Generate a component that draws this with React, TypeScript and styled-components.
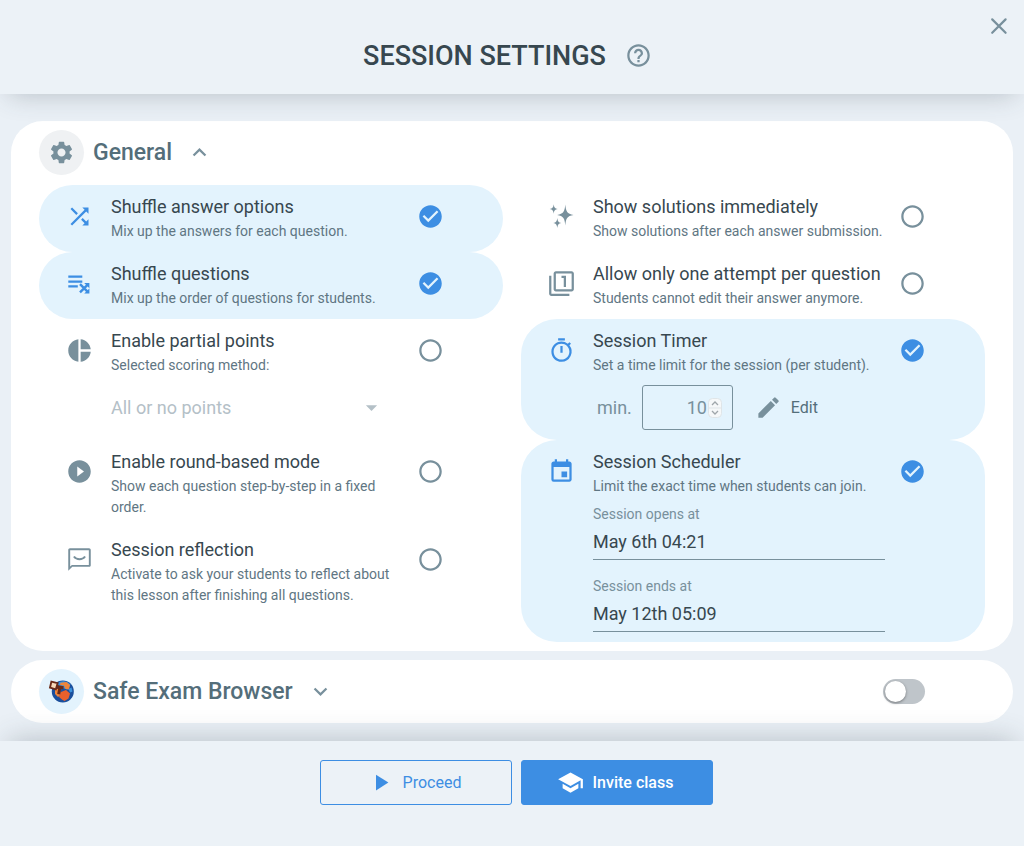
import React, { useState } from 'react';
import styled, { createGlobalStyle } from 'styled-components';
import {
  MdArrowDropDown,
  MdCheckCircle,
  MdEdit,
  MdEvent,
  MdHelpOutline,
  MdKeyboardArrowDown,
  MdKeyboardArrowUp,
  MdOutlineFilter1,
  MdOutlineTimer,
  MdPieChart,
  MdPlayArrow,
  MdPlayCircleFilled,
  MdRadioButtonUnchecked,
  MdSchool,
  MdSettings,
  MdShuffle,
} from 'react-icons/md';

const color = {
  page: '#ecf2f7',
  body: '#eaf0f6',
  ink: '#37474f',
  heading: '#546e7a',
  muted: '#5f7683',
  icon: '#78909c',
  faint: '#b4c0c7',
  blue: '#3d8ee3',
  tint: '#e3f3fd',
};

const GlobalStyle = createGlobalStyle`
  *, *::before, *::after { box-sizing: border-box; }
  body {
    margin: 0;
    background: ${color.page};
    color: ${color.ink};
    font-family: Roboto, "Liberation Sans", sans-serif;
  }
  button, input, select { font: inherit; color: inherit; margin: 0; }
  button { cursor: pointer; }
  svg { display: block; flex: none; }
`;

const Page = styled.div`
  display: flex;
  flex-direction: column;
  min-height: 100vh;
`;

const Header = styled.header`
  position: relative;
  z-index: 1;
  display: flex;
  align-items: center;
  justify-content: center;
  gap: 19px;
  height: 94px;
  padding: 17px 9px 0 0;
  background: ${color.page};
  box-shadow: 0 9px 27px -9px rgba(55, 71, 79, 0.3);
`;

const PageTitle = styled.h1`
  margin: 0;
  font-size: 27px;
  line-height: 36px;
  font-weight: 500;
  text-transform: uppercase;
`;

const IconButton = styled.button`
  display: flex;
  padding: 0;
  border: 0;
  background: none;
  color: ${color.icon};
`;

const CloseButton = styled(IconButton)`
  position: absolute;
  top: 12px;
  right: 12px;
`;

const Main = styled.main`
  flex: 1;
  display: flex;
  flex-direction: column;
  gap: 9px;
  padding: 27px 11px 18px;
  background: ${color.body};
`;

const Card = styled.section`
  padding: 9px 28px;
  border-radius: 32px;
  background: #fff;
`;

const CardHeader = styled.div`
  display: flex;
  align-items: center;
  justify-content: space-between;
  padding-right: 60px;
`;

const CardToggle = styled.button`
  display: flex;
  align-items: center;
  gap: 14px;
  padding: 0;
  border: 0;
  background: none;
  color: ${color.icon};
`;

const CardTitle = styled.span`
  display: flex;
  align-items: center;
  gap: 9px;
  color: ${color.heading};
  font-size: 23px;
  line-height: 28px;
  font-weight: 500;
`;

const Badge = styled.span<{ $tinted?: boolean }>`
  display: grid;
  place-items: center;
  width: 45px;
  height: 45px;
  border-radius: 50%;
  background: ${(p) => (p.$tinted ? color.tint : '#eff1f3')};
  color: ${color.icon};
`;

const Columns = styled.div`
  display: grid;
  grid-template-columns: 1fr 1fr;
  gap: 18px;
  padding-top: 10px;
`;

const Column = styled.div`
  display: flex;
  flex-direction: column;
`;

const Option = styled.div<{ $on: boolean }>`
  display: grid;
  grid-template-columns: 27px 1fr 27px;
  gap: 0 14px;
  align-items: start;
  padding: 10px 59px 10px 27px;
  border-radius: 36px;
  background: ${(p) => (p.$on ? color.tint : 'transparent')};
`;

const OptionIcon = styled.span<{ $on: boolean }>`
  padding-top: 8px;
  color: ${(p) => (p.$on ? color.blue : color.icon)};
`;

const OptionBody = styled.div`
  min-width: 0;
  padding-left: 4px;
`;

const OptionTitle = styled.label`
  display: block;
  font-size: 18px;
  line-height: 24px;
`;

const OptionText = styled.p`
  margin: 2px 0 0;
  color: ${color.muted};
  font-size: 14px;
  line-height: 21px;
`;

const Check = styled.span<{ $on: boolean }>`
  position: relative;
  display: block;
  margin-top: 8px;
  color: ${(p) => (p.$on ? color.blue : color.icon)};
`;

const CheckInput = styled.input`
  position: absolute;
  inset: 0;
  width: 100%;
  height: 100%;
  opacity: 0;
  cursor: pointer;
`;

const SelectWrap = styled.div`
  display: grid;
  align-items: center;
  margin: 9px 18px 0 0;
  color: ${color.faint};
  > * { grid-area: 1 / 1; }
  > svg { justify-self: end; pointer-events: none; }
`;

const Select = styled.select`
  appearance: none;
  width: 100%;
  height: 45px;
  padding: 0;
  border: 0;
  background: none;
  font-size: 18px;
  &:disabled { opacity: 1; color: ${color.faint}; }
`;

const TimerRow = styled.div`
  display: flex;
  align-items: center;
  margin-top: 9px;
  padding-left: 4px;
  color: ${color.icon};
  font-size: 18px;
`;

const NumberBox = styled.div`
  display: flex;
  align-items: center;
  width: 91px;
  height: 45px;
  margin: 0 22px 0 10px;
  padding-right: 10px;
  border: 1px solid ${color.icon};
  border-radius: 3px;
`;

const NumberInput = styled.input`
  appearance: textfield;
  flex: 1;
  min-width: 0;
  padding: 0 1px 0 0;
  border: 0;
  outline: 0;
  background: none;
  text-align: right;
  &::-webkit-inner-spin-button { appearance: none; }
`;

const EditButton = styled.button`
  display: flex;
  align-items: center;
  gap: 9px;
  padding: 0;
  border: 0;
  background: none;
  color: ${color.heading};
  font-size: 16px;
  > svg { color: ${color.icon}; }
`;

const Fields = styled.div`
  display: flex;
  flex-direction: column;
  gap: 16px;
  margin-top: 7px;
`;

const Field = styled.label`
  display: block;
  color: ${color.icon};
  font-size: 14px;
  line-height: 20px;
`;

const FieldInput = styled.input`
  display: block;
  width: 100%;
  height: 36px;
  padding: 0;
  border: 0;
  border-bottom: 1px solid ${color.icon};
  outline: 0;
  background: none;
  color: ${color.ink};
  font-size: 18px;
`;

const Switch = styled.input`
  appearance: none;
  display: flex;
  align-items: center;
  width: 42px;
  height: 25px;
  padding: 0 2px;
  border-radius: 13px;
  background: #bfc5ca;
  cursor: pointer;
  &::before {
    content: '';
    width: 21px;
    height: 21px;
    border-radius: 50%;
    background: #fff;
    box-shadow: 0 1px 3px rgba(0, 0, 0, 0.4);
  }
  &:checked { justify-content: flex-end; background: ${color.blue}; }
`;

const Footer = styled.footer`
  position: relative;
  z-index: 1;
  display: flex;
  justify-content: center;
  gap: 9px;
  padding: 19px 0 41px 9px;
  background: ${color.page};
  box-shadow: 0 -9px 27px -9px rgba(55, 71, 79, 0.3);
`;

const ActionButton = styled.button<{ $primary?: boolean }>`
  display: flex;
  align-items: center;
  justify-content: center;
  gap: 9px;
  width: 192px;
  height: 45px;
  padding: 0 4px 0 0;
  border: 1px solid ${color.blue};
  border-radius: 3px;
  background: ${(p) => (p.$primary ? color.blue : 'transparent')};
  color: ${(p) => (p.$primary ? '#fff' : color.blue)};
  font-size: 16px;
  font-weight: ${(p) => (p.$primary ? 500 : 400)};
`;

const ICON = 27;

const CloseIcon = () => (
  <svg width={ICON} height={ICON} viewBox="0 0 27 27" fill="none" stroke="currentColor" strokeWidth="2.2" strokeLinecap="round">
    <path d="M7.2 7.4l13.4 13.4M20.6 7.4L7.2 20.8" />
  </svg>
);

const ShuffleListIcon = () => (
  <svg width={ICON} height={ICON} viewBox="0 0 27 27" fill="none" stroke="currentColor" strokeWidth="2.2">
    <path d="M2.300 6.600h14M2.300 11.600h14M2.300 16.400h9.500" />
    <path d="M14 14.200l8 8M14 22.400l8-8" strokeWidth="2.400" />
    <path d="M18.200 13h5.200v5.200zM18.200 23.600h5.200v-5.200z" fill="currentColor" stroke="none" />
  </svg>
);

const SparkleIcon = () => (
  <svg width={ICON} height={ICON} viewBox="0 0 27 27" fill="currentColor">
    <path d="M17.3 1.6c.7 6.900 1.700 9.400 8.200 10.400-6.500 1-7.500 3.500-8.200 10.400-.7-6.900-1.700-9.400-8.200-10.400 6.500-1 7.500-3.500 8.200-10.400z" />
    <path d="M5.700 1.200c.4 3.100 1.100 4.200 4 4.800-2.900.6-3.600 1.700-4 4.800-.4-3.100-1.100-4.200-4-4.800 2.900-.6 3.600-1.700 4-4.800z" />
    <path d="M9.300 15c.4 3.200 1.100 4.400 4 5-2.900.6-3.600 1.800-4 5-.4-3.200-1.100-4.400-4-5 2.900-.6 3.600-1.800 4-5z" />
  </svg>
);

const ReflectionIcon = () => (
  <svg width={ICON} height={ICON} viewBox="0 0 24 24" fill="currentColor">
    <path d="M20.500 2h-17C2.700 2 2 2.700 2 3.500V22l3.600-3.500h14.900c.8 0 1.500-.7 1.500-1.500V3.500c0-.8-.7-1.500-1.500-1.500zm-.2 14.800H5.200l-1.500 1.400V3.700h16.600z" />
    <path d="M7 9.300c2.500 3.300 7.500 3.300 10 0" fill="none" stroke="currentColor" strokeWidth="1.700" />
  </svg>
);

const BrowserLogo = () => (
  <svg width={ICON} height={ICON} viewBox="0 0 27 27">
    <circle cx="14.800" cy="13.400" r="11" fill="#1b4f9c" />
    <path d="M9 5.500a10 10 0 0 1 13.500 1l-3 5-7-2z" fill="#3b93dd" />
    <path d="M12.500 4.800l6-.8 3.500 3-1 4.500-3.500-.5-1.500-3.500-4-.5z" fill="#f0853a" />
    <path d="M7 11l4.500-.5 1.500 6-3 2.500-3-3z" fill="#f0853a" />
    <path d="M13 14l5-2 4 3.500-1.500 5-4 2.500-2.500-1.500-3-2.500z" fill="#e9602c" />
    <path d="M20.500 11l3-1.500 1 4-2.500 1z" fill="#3b93dd" />
    <path d="M3.400 3.600l6.200 1.600-1.800 6.200-5.800-1.800z" fill="#f8d9b8" stroke="#6b2a16" strokeWidth="1.900" />
    <path d="M8.800 7l7 1.300-.5 3-2.300-.3-.8 5.600-3-.7.900-5-1.800-.6z" fill="#6b2a16" />
  </svg>
);

const StepperIcon = () => (
  <svg width="14" height="20" viewBox="0 0 14 20" fill="none">
    <rect x=".5" y=".5" width="13" height="19" rx="4" fill="#f6f8f9" stroke="#dfe5e8" />
    <path d="M1 10h12" stroke="#dfe5e8" />
    <path d="M4 7l3-3 3 3M4 13l3 3 3-3" stroke="#9fa6aa" strokeWidth="1.300" />
  </svg>
);

interface OptionRowProps {
  id: string;
  icon: React.ReactNode;
  title: string;
  text: string;
  initial?: boolean;
  children?: React.ReactNode;
}

const OptionRow = ({ id, icon, title, text, initial = false, children }: OptionRowProps) => {
  const [on, setOn] = useState(initial);
  return (
    <Option $on={on}>
      <OptionIcon $on={on}>{icon}</OptionIcon>
      <OptionBody>
        <OptionTitle htmlFor={id}>{title}</OptionTitle>
        <OptionText>{text}</OptionText>
        {children}
      </OptionBody>
      <Check $on={on}>
        {on ? <MdCheckCircle size={ICON} /> : <MdRadioButtonUnchecked size={ICON} />}
        <CheckInput id={id} type="checkbox" checked={on} onChange={(e) => setOn(e.target.checked)} />
      </Check>
    </Option>
  );
};

export default function App() {
  return (
    <Page>
      <GlobalStyle />
      <Header>
        <PageTitle>Session settings</PageTitle>
        <IconButton aria-label="Help">
          <MdHelpOutline size={ICON} />
        </IconButton>
        <CloseButton aria-label="Close">
          <CloseIcon />
        </CloseButton>
      </Header>
      <Main>
        <Card>
          <CardHeader>
            <CardToggle aria-expanded="true">
              <CardTitle>
                <Badge>
                  <MdSettings size={ICON} />
                </Badge>
                General
              </CardTitle>
              <MdKeyboardArrowUp size={ICON} />
            </CardToggle>
          </CardHeader>
          <Columns>
            <Column>
              <OptionRow id="shuffle-answers" icon={<MdShuffle size={ICON} />} title="Shuffle answer options" text="Mix up the answers for each question." initial />
              <OptionRow id="shuffle-questions" icon={<ShuffleListIcon />} title="Shuffle questions" text="Mix up the order of questions for students." initial />
              <OptionRow id="partial-points" icon={<MdPieChart size={ICON} />} title="Enable partial points" text="Selected scoring method:">
                <SelectWrap>
                  <Select aria-label="Scoring method" disabled>
                    <option>All or no points</option>
                  </Select>
                  <MdArrowDropDown size={ICON} />
                </SelectWrap>
              </OptionRow>
              <OptionRow id="round-based" icon={<MdPlayCircleFilled size={ICON} />} title="Enable round-based mode" text="Show each question step-by-step in a fixed order." />
              <OptionRow id="reflection" icon={<ReflectionIcon />} title="Session reflection" text="Activate to ask your students to reflect about this lesson after finishing all questions." />
            </Column>
            <Column>
              <OptionRow id="show-solutions" icon={<SparkleIcon />} title="Show solutions immediately" text="Show solutions after each answer submission." />
              <OptionRow id="one-attempt" icon={<MdOutlineFilter1 size={ICON} />} title="Allow only one attempt per question" text="Students cannot edit their answer anymore." />
              <OptionRow id="timer" icon={<MdOutlineTimer size={ICON} />} title="Session Timer" text="Set a time limit for the session (per student)." initial>
                <TimerRow>
                  <label htmlFor="minutes">min.</label>
                  <NumberBox>
                    <NumberInput id="minutes" type="number" defaultValue={10} />
                    <StepperIcon />
                  </NumberBox>
                  <EditButton>
                    <MdEdit size={ICON} />
                    Edit
                  </EditButton>
                </TimerRow>
              </OptionRow>
              <OptionRow id="scheduler" icon={<MdEvent size={ICON} />} title="Session Scheduler" text="Limit the exact time when students can join." initial>
                <Fields>
                  <Field>
                    Session opens at
                    <FieldInput type="text" defaultValue="May 6th 04:21" />
                  </Field>
                  <Field>
                    Session ends at
                    <FieldInput type="text" defaultValue="May 12th 05:09" />
                  </Field>
                </Fields>
              </OptionRow>
            </Column>
          </Columns>
        </Card>
        <Card>
          <CardHeader>
            <CardToggle aria-expanded="false">
              <CardTitle>
                <Badge $tinted>
                  <BrowserLogo />
                </Badge>
                Safe Exam Browser
              </CardTitle>
              <MdKeyboardArrowDown size={ICON} />
            </CardToggle>
            <Switch type="checkbox" role="switch" aria-label="Safe Exam Browser" />
          </CardHeader>
        </Card>
      </Main>
      <Footer>
        <ActionButton>
          <MdPlayArrow size={ICON} />
          Proceed
        </ActionButton>
        <ActionButton $primary>
          <MdSchool size={ICON} />
          Invite class
        </ActionButton>
      </Footer>
    </Page>
  );
}
